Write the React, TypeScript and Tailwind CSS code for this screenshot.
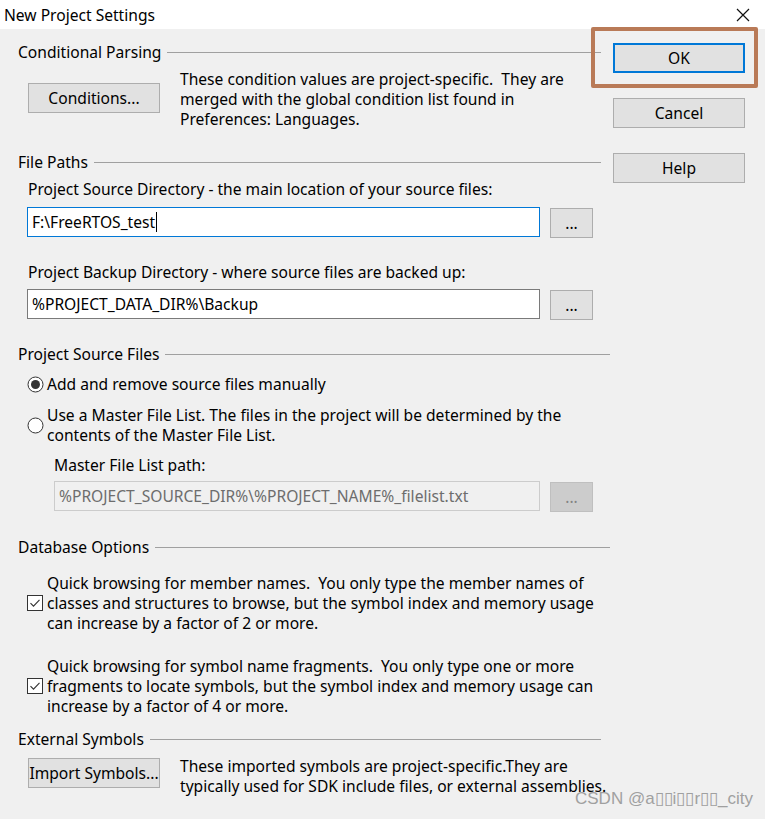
import React from "react";

const font = { fontFamily: '"Noto Sans", "Open Sans", "Noto Sans CJK SC", sans-serif' };

function Header({ title, lineRight }: { title: string; lineRight: string }) {
  return (
    <div className="flex items-center h-[20px]">
      <span className="whitespace-nowrap">{title}</span>
      <div className={`flex-1 h-px bg-[#a0a0a0] ml-[6px] ${lineRight}`} />
    </div>
  );
}

function Btn({ children, className = "" }: { children: React.ReactNode; className?: string }) {
  return (
    <div
      className={`h-[30px] flex items-center justify-center bg-[#e1e1e1] border border-[#adadad] ${className}`}
    >
      {children}
    </div>
  );
}

function Radio({ checked }: { checked: boolean }) {
  return (
    <svg width="17" height="17" viewBox="0 0 17 17" className="shrink-0">
      <circle cx="8.5" cy="8.5" r="7.5" fill="#fff" stroke="#333" strokeWidth="1" />
      {checked && <circle cx="8.5" cy="8.5" r="4.5" fill="#333" />}
    </svg>
  );
}

function Check() {
  return (
    <svg width="16" height="16" viewBox="0 0 16 16" className="shrink-0">
      <rect x="0.5" y="0.5" width="15" height="15" fill="#fff" stroke="#333" />
      <path d="M3.5 8.2 L6.5 11.2 L12.5 4.8" fill="none" stroke="#333" strokeWidth="1.1" />
    </svg>
  );
}

export default function App() {
  return (
    <div className="w-[765px] h-[819px] relative overflow-hidden bg-[#f0f0f0] text-[15.6px] leading-[20px] text-black" style={font}>
      {/* Title bar */}
      <div className="h-[29px] bg-white flex items-center justify-between pl-[4px] pr-[15px]">
        <span>New Project Settings</span>
        <svg width="14" height="14" viewBox="0 0 14 14">
          <path d="M1 1 L13 13 M13 1 L1 13" stroke="#111" strokeWidth="1.2" />
        </svg>
      </div>

      <div className="flex">
        {/* Left column */}
        <div className="w-[613px] pl-[18px] flex flex-col">
          <div className="mt-[13px]">
            <Header title="Conditional Parsing" lineRight="mr-[12px]" />
          </div>
          <div className="flex mt-[7px]">
            <Btn className="w-[132px] ml-[10px] mt-[14px]">Conditions...</Btn>
            <div className="ml-[20px] w-[420px] whitespace-nowrap">
              These condition values are project-specific.&nbsp; They are
              <br />
              merged with the global condition list found in
              <br />
              Preferences: Languages.
            </div>
          </div>

          <div className="mt-[23px]">
            <Header title="File Paths" lineRight="mr-[12px]" />
          </div>
          <div className="mt-[7px] ml-[10px] h-[20px]">
            Project Source Directory - the main location of your source files:
          </div>
          <div className="flex mt-[8px] ml-[9px]">
            <div className="w-[513px] h-[30px] bg-white border border-[#0078d7] flex items-center pl-[4px]">
              F:\FreeRTOS_test<span className="inline-block w-px h-[20px] bg-black ml-[1px]" />
            </div>
            <Btn className="w-[43px] ml-[10px] mt-[1px]">...</Btn>
          </div>
          <div className="mt-[24px] ml-[10px] h-[20px]">
            Project Backup Directory - where source files are backed up:
          </div>
          <div className="flex mt-[7px] ml-[9px]">
            <div className="w-[513px] h-[30px] bg-white border border-[#7a7a7a] flex items-center pl-[4px]">
              %PROJECT_DATA_DIR%\Backup
            </div>
            <Btn className="w-[43px] ml-[10px] mt-[1px]">...</Btn>
          </div>

          <div className="mt-[24px]">
            <Header title="Project Source Files" lineRight="mr-[3px]" />
          </div>
          <div className="flex items-center mt-[10px] ml-[9px] h-[20px]">
            <Radio checked />
            <span className="ml-[3px]">Add and remove source files manually</span>
          </div>
          <div className="flex items-center mt-[11px] ml-[9px]">
            <Radio checked={false} />
            <div className="ml-[3px]">
              Use a Master File List. The files in the project will be determined by the
              <br />
              contents of the Master File List.
            </div>
          </div>
          <div className="mt-[10px] ml-[36px] h-[20px]">Master File List path:</div>
          <div className="flex mt-[6px] ml-[36px]">
            <div className="w-[486px] h-[30px] bg-[#f0f0f0] border border-[#cccccc] flex items-center pl-[4px] text-[#6d6d6d]">
              %PROJECT_SOURCE_DIR%\%PROJECT_NAME%_filelist.txt
            </div>
            <div className="w-[43px] h-[30px] ml-[10px] mt-[1px] bg-[#cccccc] border border-[#bfbfbf] flex items-center justify-center text-[#838383]">
              ...
            </div>
          </div>

          <div className="mt-[25px]">
            <Header title="Database Options" lineRight="mr-[3px]" />
          </div>
          <div className="flex items-center mt-[16px] ml-[9px]">
            <Check />
            <div className="ml-[4px]">
              Quick browsing for member names.&nbsp; You only type the member names of
              <br />
              classes and structures to browse, but the symbol index and memory usage
              <br />
              can increase by a factor of 2 or more.
            </div>
          </div>
          <div className="flex items-center mt-[23px] ml-[9px]">
            <Check />
            <div className="ml-[4px]">
              Quick browsing for symbol name fragments.&nbsp; You only type one or more
              <br />
              fragments to locate symbols, but the symbol index and memory usage can
              <br />
              increase by a factor of 4 or more.
            </div>
          </div>

          <div className="mt-[13px]">
            <Header title="External Symbols" lineRight="mr-[12px]" />
          </div>
          <div className="flex mt-[7px]">
            <Btn className="w-[132px] ml-[10px] mt-[2px]">Import Symbols...</Btn>
            <div className="ml-[20px] whitespace-nowrap">
              These imported symbols are project-specific.They are
              <br />
              typically used for SDK include files, or external assemblies.
            </div>
          </div>
        </div>

        {/* Right column */}
        <div className="flex flex-col w-[132px] pt-[14px]">
          <div className="h-[30px] flex items-center justify-center bg-[#e1e1e1] border-2 border-[#0078d7]">OK</div>
          <Btn className="mt-[25px]">Cancel</Btn>
          <Btn className="mt-[25px]">Help</Btn>
        </div>
      </div>

      {/* Annotation highlight */}
      <div className="absolute left-[591px] top-[27px] w-[167px] h-[61px] border-[4px] border-[#b97a57] rounded-[2px]" />

      {/* Watermark */}
      <div
        className="absolute left-[575px] top-[787px] text-[17px] leading-[24px] text-[#a0a0a0] whitespace-nowrap"
        style={{ fontFamily: '"Liberation Sans", Arial, sans-serif' }}
      >
        CSDN @a▯▯i▯▯r▯▯_city
      </div>
    </div>
  );
}
